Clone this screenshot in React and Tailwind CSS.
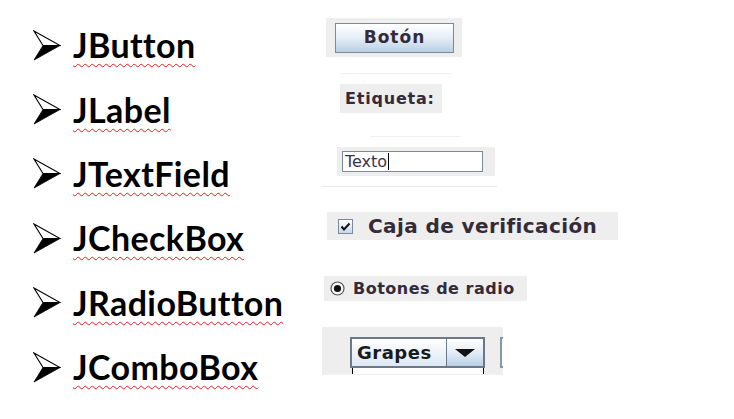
import React from "react";

const ITEMS = ["JButton", "JLabel", "JTextField", "JCheckBox", "JRadioButton", "JComboBox"];

const javaFont = { fontFamily: '"DejaVu Sans", sans-serif' };

function Arrowhead() {
  return (
    <svg width="28" height="31" viewBox="0 0 28 31" className="shrink-0">
      <polygon points="1,1 27,15.5 10,15.5" fill="#fff" stroke="#000" strokeWidth="1.1" strokeLinejoin="miter" />
      <polygon points="10,15.5 27,15.5 1,30" fill="#000" stroke="#000" strokeWidth="0.8" />
    </svg>
  );
}

export default function App() {
  return (
    <div className="w-[734px] h-[419px] bg-white flex overflow-hidden">
      {/* Bullet list */}
      <div className="w-[320px] shrink-0 flex flex-col pt-[13px]">
        {ITEMS.map((name) => (
          <div key={name} className="h-[64.4px] flex items-center pl-[33px] gap-[12px]">
            <Arrowhead />
            <span
              className="text-[34px] font-bold leading-none text-black tracking-[0.4px] underline decoration-wavy decoration-[#e02020] decoration-1 underline-offset-[5px]"
              style={{ fontFamily: "Lato, sans-serif" }}
            >
              {name}
            </span>
          </div>
        ))}
      </div>

      {/* Swing samples */}
      <div className="flex flex-col items-start" style={javaFont}>
        {/* JButton */}
        <div className="mt-[18px] ml-[6px] w-[136px] h-[39px] bg-[#eeeeee] flex items-center pl-[9px]">
          <div className="w-[119px] h-[30px] border border-[#7a8a99] bg-linear-to-b from-white via-[#e6eef7] to-[#b8cfe5] flex items-center justify-center">
            <span className="text-[17px] font-bold text-[#332b3c] tracking-[1px]">Botón</span>
          </div>
        </div>

        <div className="mt-[16px] ml-[20px] w-[112px] h-px bg-[#f3f3f3]" />

        {/* JLabel */}
        <div className="mt-[10px] ml-[20px] w-[102px] h-[29px] bg-[#eeeeee] flex items-center pl-[5px]">
          <span className="text-[16px] font-bold text-[#332b3c] tracking-[0.8px]">Etiqueta:</span>
        </div>

        <div className="mt-[23px] ml-[50px] w-[90px] h-px bg-[#efefef]" />

        {/* JTextField */}
        <div className="mt-[10px] ml-[17px] w-[158px] h-[29px] bg-[#eeeeee] flex items-center pl-[5px]">
          <div className="w-[141px] h-[21px] border border-[#7a8a99] bg-white flex items-center pl-[2px]">
            <span className="text-[16px] leading-none text-[#3b3350]">Texto</span>
            <span className="w-px h-[17px] bg-black ml-px" />
          </div>
        </div>

        <div className="mt-[10px] ml-[2px] w-[175px] h-px bg-[#e8e8e8]" />

        {/* JCheckBox */}
        <div className="mt-[25px] ml-[7px] w-[291px] h-[28px] bg-[#eeeeee] flex items-center pl-[11px] gap-[15px]">
          <div className="w-[15px] h-[15px] border border-[#7a8a99] bg-linear-to-b from-white to-[#c7d8ea] flex items-center justify-center">
            <svg width="11" height="11" viewBox="0 0 11 11">
              <path d="M1.5 5.5 L4 8.5 L9.5 2.5" fill="none" stroke="#111" strokeWidth="2" />
            </svg>
          </div>
          <span className="text-[20px] font-bold text-[#352a38] tracking-[0.4px]">Caja de verificación</span>
        </div>

        {/* JRadioButton */}
        <div className="mt-[36px] ml-[4px] w-[203px] h-[25px] bg-[#eeeeee] flex items-center pl-[6px] gap-[8px]">
          <svg width="15" height="15" viewBox="0 0 15 15">
            <circle cx="7.5" cy="7.5" r="6.5" fill="#fbfbfb" stroke="#555" strokeWidth="1.2" />
            <circle cx="7.5" cy="7.5" r="3.6" fill="#111" />
          </svg>
          <span className="text-[16px] font-bold text-[#332b3c] tracking-[0.5px]">Botones de radio</span>
        </div>

        {/* JComboBox */}
        <div className="mt-[26px] ml-[2px] w-[181px] h-[48px] bg-[#eeeeee] flex items-start pt-[10px] pl-[28px]">
          <div className="flex flex-col">
            <div className="w-[135px] h-[31px] border-2 border-[#6c7886] flex">
              <div className="w-[95px] h-full bg-linear-to-b from-white to-[#dce8f4] border-r border-[#6c7886] flex items-center pl-[5px]">
                <span className="text-[18px] font-bold text-[#1a1a1a] tracking-[0.5px]">Grapes</span>
              </div>
              <div className="flex-1 h-full bg-linear-to-b from-white via-[#e3edf7] to-[#b8cfe5] flex items-center justify-center">
                <svg width="20" height="8" viewBox="0 0 20 8">
                  <polygon points="0,0 20,0 10,8" fill="#111" />
                </svg>
              </div>
            </div>
            <div className="ml-[2px] w-[132px] h-[6px] border-x border-black bg-white" />
          </div>
          <div className="ml-[15px] w-[3px] h-[31px] border-l-2 border-y-2 border-[#8a96a4] bg-white" />
        </div>
      </div>
    </div>
  );
}
